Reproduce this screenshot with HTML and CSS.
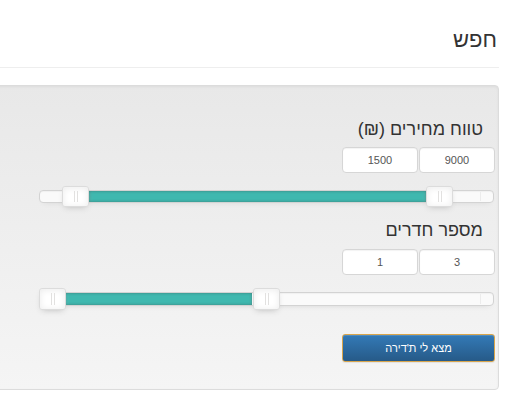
FILE: index.html
```html
<!DOCTYPE html>
<html lang="he" dir="rtl">
<head>
<meta charset="utf-8">
<link rel="stylesheet" href="styles.css">
</head>
<body>
<div class="page">
  <h2 class="title">חפש</h2>
  <hr class="rule">
  <div class="well">
    <div class="group">
      <label class="lbl">טווח מחירים (₪)</label>
      <div class="inputs">
        <input class="field" type="text" value="9000">
        <input class="field" type="text" value="1500">
      </div>
    </div>
    <div class="slider">
      <div class="connect" style="left: 10.9%; right: 14.8%;"></div>
      <div class="handle" style="left: 7.8%;"></div>
      <div class="handle" style="left: 88%;"></div>
      <div class="tick"></div>
    </div>
    <div class="group group-2">
      <label class="lbl">מספר חדרים</label>
      <div class="inputs">
        <input class="field" type="text" value="3">
        <input class="field" type="text" value="1">
      </div>
    </div>
    <div class="slider slider-2">
      <div class="connect" style="left: 5.5%; right: 53.3%;"></div>
      <div class="handle" style="left: 2.6%;"></div>
      <div class="handle" style="left: 49.8%;"></div>
      <div class="tick"></div>
    </div>
    <div class="actions">
      <button class="btn" type="button">מצא לי ת'דירה</button>
    </div>
  </div>
</div>
</body>
</html>
```

FILE: styles.css
```css
html, body {
  margin: 0;
  padding: 0;
  overflow: hidden;
  background: #fff;
}

body {
  font-family: "Liberation Sans", Arial, sans-serif;
  color: #333;
}

.page {
  width: 600px;
  margin-right: 13px;
  padding-top: 28px;
}

.title {
  margin: 0;
  padding-right: 2px;
  font-size: 22px;
  font-weight: normal;
  line-height: 24px;
  color: #333;
}

.rule {
  margin: 15px 0 0;
  border: 0;
  border-top: 1px solid #eee;
  height: 0;
}

.well {
  margin-top: 17px;
  padding: 32px 3px 27px 0;
  border: 1px solid #dcdcdc;
  border-radius: 4px;
  background: linear-gradient(to bottom, #e8e8e8 0%, #f5f5f5 100%);
  box-shadow: inset 0 1px 3px rgba(0, 0, 0, .05), 0 1px 0 rgba(255, 255, 255, .1);
}

.group {
  display: flex;
  flex-direction: column;
  align-items: flex-start;
}

.lbl {
  display: block;
  padding-right: 12px;
  font-size: 18px;
  line-height: 22px;
  color: #333;
}

.inputs {
  display: flex;
  gap: 1px;
  margin-top: 7px;
}

.field {
  box-sizing: border-box;
  width: 76px;
  height: 26px;
  margin: 0;
  padding: 0 6px;
  border: 1px solid #d6d6d6;
  border-radius: 4px;
  background: #fff;
  box-shadow: inset 0 1px 1px rgba(0, 0, 0, .05);
  font-family: "Liberation Sans", Arial, sans-serif;
  font-size: 11px;
  color: #555;
  text-align: center;
}

.slider {
  position: relative;
  box-sizing: border-box;
  width: 455px;
  height: 13px;
  margin-top: 17px;
  margin-right: 1px;
  border: 1px solid #d3d3d3;
  border-radius: 4px;
  background: #fafafa;
  box-shadow: inset 0 1px 1px #f0f0f0, 0 3px 6px -5px #bbb;
}

.slider-2 {
  height: 14px;
}

.connect {
  position: absolute;
  top: 0;
  bottom: 0;
  background: #3fb8af;
  box-shadow: inset 0 0 3px rgba(51, 51, 51, .45);
}

.tick {
  position: absolute;
  top: 1px;
  bottom: 1px;
  right: 12px;
  width: 1px;
  background: #ececec;
}

.handle {
  position: absolute;
  z-index: 2;
  top: -5px;
  box-sizing: border-box;
  width: 27px;
  height: 21px;
  margin-left: -13px;
  border: 1px solid #dcdcdc;
  border-radius: 3px;
  background: #fff;
  box-shadow: inset 0 0 1px #fff, inset 0 1px 7px #ebebeb, 0 3px 6px -3px #bbb;
}

.slider-2 .handle {
  top: -5px;
  height: 22px;
}

.handle::before,
.handle::after {
  content: "";
  position: absolute;
  top: 4px;
  bottom: 4px;
  width: 1px;
  background: #e2e1e0;
}

.handle::before {
  left: 11px;
}

.handle::after {
  left: 14px;
}

.group-2 .lbl {
  margin-top: 16px;
}

.group-2 .inputs {
  margin-top: 8px;
}

.actions {
  display: flex;
  margin-top: 28px;
}

.btn {
  box-sizing: border-box;
  width: 153px;
  height: 28px;
  margin: 0;
  padding: 0;
  border: 1px solid #d8a54c;
  border-radius: 3px;
  background: linear-gradient(to bottom, #337ab7 0%, #265a88 100%);
  box-shadow: inset 0 1px 0 rgba(255, 255, 255, .15), 0 1px 1px rgba(0, 0, 0, .075);
  font-family: "Liberation Sans", Arial, sans-serif;
  font-size: 11px;
  color: #fff;
  text-align: center;
}
```
